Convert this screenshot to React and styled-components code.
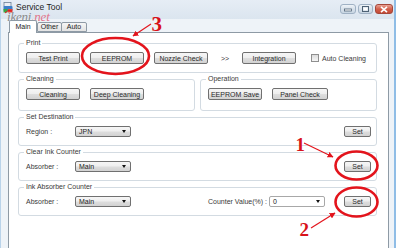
import React from 'react';
import styled, { createGlobalStyle } from 'styled-components';

const Global = createGlobalStyle`
  html, body { margin: 0; padding: 0; background: #fff; overflow: hidden; }
  body { font-family: "Liberation Sans", Arial, sans-serif; }
  * { box-sizing: border-box; }
`;

const Stage = styled.div`
  position: relative;
  width: 400px;
  height: 248px;
  overflow: hidden;
  background: #fff;
`;

const Window = styled.div`
  width: 396px;
  height: 270px;
  border-left: 1px solid #b9d3ea;
  border-right: 2px solid #8fbde6;
  background: #eef3f8;
  display: flex;
  flex-direction: column;
`;

const TitleBar = styled.div`
  height: 19px;
  flex: none;
  display: flex;
  align-items: flex-start;
  padding: 0 1px;
  background: linear-gradient(#e6edf5, #dbe5ef);
`;

const AppIcon = styled.svg`
  margin: 2px 0 0 1px;
  flex: none;
`;

const Title = styled.div`
  margin: 3px 0 0 3px;
  font-size: 8.5px;
  line-height: 9px;
  height: 9px;
  color: #1e1e1e;
`;

const Controls = styled.div`
  margin: 4px 0 0 auto;
  display: flex;
  gap: 2px;
`;

const Ctl = styled.div`
  width: ${p => p.$w}px;
  height: 10px;
  border-radius: 3px;
  border: 1px solid ${p => (p.$close ? '#a5473a' : '#9fb1c4')};
  background: ${p =>
    p.$close
      ? 'linear-gradient(#e9a295, #d2604c 50%, #c44a36)'
      : 'linear-gradient(#eef3f8, #d6e0ea 50%, #c9d6e3)'};
  display: flex;
  align-items: center;
  justify-content: center;
`;

const Body = styled.div`
  flex: 1;
  display: flex;
  flex-direction: column;
  padding: 0 5px 0 7px;
`;

const TabStrip = styled.div`
  margin-top: 1px;
  height: 12px;
  display: flex;
  align-items: flex-end;
  padding-left: 1px;
  position: relative;
  z-index: 1;
`;

const Tab = styled.div`
  width: ${p => p.$w}px;
  height: ${p => (p.$active ? 13 : 10)}px;
  margin-bottom: ${p => (p.$active ? -1 : 0)}px;
  margin-left: ${p => p.$ml || 0}px;
  border: 1px solid #8e9aa5;
  border-bottom: ${p => (p.$active ? 'none' : '1px solid #8e9aa5')};
  border-radius: 2px 2px 0 0;
  background: ${p => (p.$active ? '#fff' : 'linear-gradient(#f6f6f6, #e3e3e3)')};
  font-size: 7px;
  line-height: ${p => (p.$active ? 11 : 8)}px;
  text-align: center;
  color: #222;
`;

const Panel = styled.div`
  flex: 1;
  background: #fff;
  border: 1px solid #8e9aa5;
  padding: 10px 11px 0 9px;
  display: flex;
  flex-direction: column;
  gap: 6px;
`;

const Pair = styled.div`
  display: grid;
  grid-template-columns: 1fr 1fr;
  gap: 5px;
`;

const Group = styled.div`
  height: ${p => p.$h}px;
  border: 1px solid #d3dbe2;
  border-radius: 3px;
  padding: 0 5px 0 7px;
  display: flex;
  flex-direction: column;
`;

const Legend = styled.div`
  align-self: flex-start;
  margin: -6px 0 0 -2px;
  padding: 0 2px;
  height: 10px;
  line-height: 10px;
  font-size: 7px;
  background: #fff;
  color: #3a3a3a;
`;

const Row = styled.div`
  margin-top: 4px;
  display: flex;
  align-items: center;
  gap: ${p => p.$gap || 0}px;
`;

const Btn = styled.button`
  width: ${p => p.$w || 54}px;
  height: ${p => p.$h || 12}px;
  margin: 0;
  padding: 0;
  flex: none;
  border: 1px solid #707070;
  border-radius: 2px;
  background: linear-gradient(#f6f6f6 0%, #eeeeee 48%, #dedede 52%, #d2d2d2 100%);
  font-family: "Liberation Sans", Arial, sans-serif;
  font-size: 7px;
  line-height: 9px;
  color: #2a2a2a;
  text-align: center;
`;

const Chevrons = styled.div`
  width: 14px;
  text-align: center;
  font-size: 7px;
  color: #3a3a3a;
`;

const CheckWrap = styled.div`
  margin-left: 5px;
  display: flex;
  align-items: center;
  gap: 3px;
  font-size: 7px;
  color: #3a3a3a;
`;

const Box = styled.div`
  width: 8px;
  height: 8px;
  border: 1px solid #8f8f8f;
  background: linear-gradient(#dcdcdc, #f6f6f6);
`;

const FieldLabel = styled.div`
  width: ${p => p.$w || 49}px;
  flex: none;
  font-size: 7px;
  color: #3a3a3a;
`;

const Select = styled.div`
  width: 56px;
  height: 11px;
  flex: none;
  border: 1px solid ${p => (p.$plain ? '#a8a8a8' : '#707070')};
  border-radius: 2px;
  background: ${p =>
    p.$plain ? '#fff' : 'linear-gradient(#f6f6f6 0%, #eeeeee 48%, #dedede 52%, #d2d2d2 100%)'};
  display: flex;
  align-items: center;
  justify-content: space-between;
  padding: 0 4px 0 3px;
  font-size: 7px;
  color: #222;
`;

const Caret = styled.span`
  width: 0;
  height: 0;
  border-left: 2.5px solid transparent;
  border-right: 2.5px solid transparent;
  border-top: 3px solid #111;
`;

const Spacer = styled.div`
  flex: 1;
`;

const ValueGroup = styled.div`
  display: flex;
  align-items: center;
  gap: 2px;
  margin-right: 19px;
  font-size: 7px;
  color: #3a3a3a;
`;

const Overlay = styled.svg`
  position: absolute;
  left: 0;
  top: 0;
  pointer-events: none;
`;

const Watermark = styled.div`
  position: absolute;
  left: 7px;
  top: 12px;
  height: 10px;
  font-family: "Liberation Serif", "Times New Roman", serif;
  font-style: italic;
  font-size: 13px;
  line-height: 10px;
  color: #8a8a8a;
  letter-spacing: -0.2px;
  span { color: #e2748a; }
`;

const Dropdown = ({ value, plain }) => (
  <Select $plain={plain}>
    <span>{value}</span>
    <Caret />
  </Select>
);

export default function App() {
  return (
    <Stage>
      <Global />
      <Window>
        <TitleBar>
          <AppIcon width="10" height="11" viewBox="0 0 10 11">
            <rect x="1" y="0.5" width="7" height="4" fill="#e9eef5" stroke="#6a7f96" strokeWidth="0.8" />
            <rect x="0.5" y="4" width="9" height="5" rx="1" fill="#3b7fc8" />
            <rect x="0.5" y="7" width="4" height="3.5" fill="#3aa845" />
            <rect x="5" y="7" width="4.5" height="3.5" fill="#e04a3a" />
          </AppIcon>
          <Title>Service Tool</Title>
          <Controls>
            <Ctl $w={16}>
              <svg width="8" height="5" viewBox="0 0 8 5"><rect x="0.5" y="2" width="7" height="2" fill="#fff" stroke="#4e6275" strokeWidth="0.8" /></svg>
            </Ctl>
            <Ctl $w={15}>
              <svg width="7" height="6" viewBox="0 0 7 6"><rect x="0.5" y="0.5" width="6" height="5" fill="none" stroke="#4e6275" strokeWidth="1" /><rect x="1.5" y="1.8" width="4" height="2.5" fill="#fff" /></svg>
            </Ctl>
            <Ctl $w={18} $close>
              <svg width="8" height="7" viewBox="0 0 8 7"><path d="M1 0.8 L7 6.2 M7 0.8 L1 6.2" stroke="#fff" strokeWidth="1.6" /></svg>
            </Ctl>
          </Controls>
        </TitleBar>
        <Body>
          <TabStrip>
            <Tab $w={28} $active>Main</Tab>
            <Tab $w={25}>Other</Tab>
            <Tab $w={26} $ml={-1}>Auto</Tab>
          </TabStrip>
          <Panel>
            <Group $h={30}>
              <Legend>Print</Legend>
              <Row $gap={10}>
                <Btn>Test Print</Btn>
                <Btn>EEPROM</Btn>
                <Btn>Nozzle Check</Btn>
                <Chevrons>&gt;&gt;</Chevrons>
                <Btn>Integration</Btn>
                <CheckWrap>
                  <Box />
                  Auto Cleaning
                </CheckWrap>
              </Row>
            </Group>
            <Pair>
              <Group $h={32}>
                <Legend>Cleaning</Legend>
                <Row $gap={10}>
                  <Btn>Cleaning</Btn>
                  <Btn>Deep Cleaning</Btn>
                </Row>
              </Group>
              <Group $h={32}>
                <Legend>Operation</Legend>
                <Row $gap={10}>
                  <Btn>EEPROM Save</Btn>
                  <Btn $w={56}>Panel Check</Btn>
                </Row>
              </Group>
            </Pair>
            <Group $h={29}>
              <Legend>Set Destination</Legend>
              <Row>
                <FieldLabel>Region :</FieldLabel>
                <Dropdown value="JPN" />
                <Spacer />
                <Btn $w={27} $h={11}>Set</Btn>
              </Row>
            </Group>
            <Group $h={29}>
              <Legend>Clear Ink Counter</Legend>
              <Row>
                <FieldLabel>Absorber :</FieldLabel>
                <Dropdown value="Main" />
                <Spacer />
                <Btn $w={27} $h={11}>Set</Btn>
              </Row>
            </Group>
            <Group $h={29}>
              <Legend>Ink Absorber Counter</Legend>
              <Row>
                <FieldLabel>Absorber :</FieldLabel>
                <Dropdown value="Main" />
                <Spacer />
                <ValueGroup>
                  Counter Value(%) :
                  <Dropdown value="0" plain />
                </ValueGroup>
                <Btn $w={27} $h={11}>Set</Btn>
              </Row>
            </Group>
          </Panel>
        </Body>
      </Window>

      <Watermark>ikeni<span>.net</span></Watermark>

      <Overlay width="400" height="248" viewBox="0 0 400 248">
        <defs>
          <marker id="ah" viewBox="0 0 10 10" refX="9" refY="5" markerWidth="5" markerHeight="5" orient="auto">
            <path d="M0 0 L10 5 L0 10 z" fill="#e3141c" />
          </marker>
        </defs>
        <path d="M5 13 Q8 9 12 11" stroke="#e3141c" strokeWidth="1" fill="none" />
        <g fill="none" stroke="#e3141c" strokeWidth="2.6">
          <ellipse cx="115.5" cy="56" rx="33.5" ry="18" />
          <ellipse cx="356.5" cy="165.5" rx="21" ry="14" />
          <ellipse cx="356.5" cy="202" rx="21" ry="14.5" />
        </g>
        <g stroke="#e3141c" strokeWidth="1.2" fill="none">
          <line x1="151" y1="24" x2="133" y2="36" markerEnd="url(#ah)" />
          <line x1="304" y1="143" x2="333" y2="157" markerEnd="url(#ah)" />
          <line x1="311" y1="228" x2="335" y2="213" markerEnd="url(#ah)" />
        </g>
        <g fill="#d8121a" fontFamily="'Liberation Serif', 'Times New Roman', serif" fontWeight="bold">
          <text x="151.5" y="30.5" fontSize="21">3</text>
          <text x="295.5" y="151" fontSize="19">1</text>
          <text x="299.5" y="235.5" fontSize="19">2</text>
        </g>
      </Overlay>
    </Stage>
  );
}
